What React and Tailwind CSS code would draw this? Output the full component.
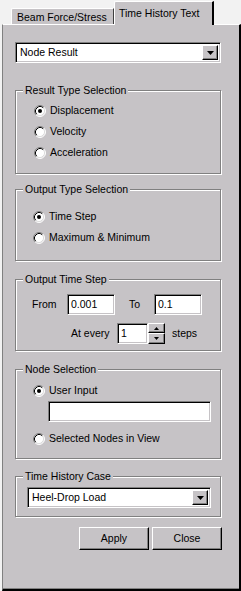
import React from "react";

const FONT = { fontFamily: '"Liberation Sans", Arial, sans-serif' };

function Radio({ checked }) {
  return (
    <svg width="12" height="12" viewBox="0 0 12 12" className="block shrink-0">
      <circle cx="6" cy="6" r="5" fill="#fff" />
      <path d="M2.11 9.89 A5.5 5.5 0 0 1 9.89 2.11" fill="none" stroke="#808080" strokeWidth="1" />
      <path d="M9.89 2.11 A5.5 5.5 0 0 1 2.11 9.89" fill="none" stroke="#ffffff" strokeWidth="1" />
      <path d="M2.82 9.18 A4.5 4.5 0 0 1 9.18 2.82" fill="none" stroke="#000" strokeWidth="1" />
      <path d="M9.18 2.82 A4.5 4.5 0 0 1 2.82 9.18" fill="none" stroke="#dcdcdc" strokeWidth="1" />
      {checked && <circle cx="6" cy="6" r="2" fill="#000" />}
    </svg>
  );
}

function RadioRow({ checked, label, className = "" }) {
  return (
    <div className={"h-[21px] flex items-center " + className}>
      <Radio checked={checked} />
      <span className="ml-[4px] whitespace-nowrap">{label}</span>
    </div>
  );
}

const sunken =
  "border border-t-[#808080] border-l-[#808080] border-b-white border-r-white shadow-[inset_1px_1px_0_#000,inset_-1px_-1px_0_#c6c3c6]";
const raised =
  "border border-t-white border-l-white border-b-black border-r-black shadow-[inset_-1px_-1px_0_#808080]";

function Arrow() {
  return (
    <svg width="7" height="4" viewBox="0 0 7 4" className="block">
      <polygon points="0,0 7,0 3.5,4" fill="#000" />
    </svg>
  );
}

function Select({ value, className = "" }) {
  return (
    <div className={"h-[21px] bg-white flex items-stretch p-[2px] " + sunken + " " + className}>
      <div className="flex-1 flex items-center pl-[2px] whitespace-nowrap">{value}</div>
      <div className={"w-[16px] bg-[#c6c3c6] flex items-center justify-center " + raised}>
        <Arrow />
      </div>
    </div>
  );
}

function Input({ value = "", className = "" }) {
  return (
    <div className={"h-[21px] bg-white flex items-center pl-[3px] " + sunken + " " + className}>
      {value}
    </div>
  );
}

function Group({ title, className = "", children }) {
  return (
    <div
      className={
        "w-[206px] border border-[#808080] shadow-[inset_1px_1px_0_#fff,1px_1px_0_#fff] " + className
      }
    >
      <div className="block w-fit -mt-[7px] ml-[7px] px-[2px] leading-[13px] bg-[#c6c3c6] whitespace-nowrap">
        {title}
      </div>
      {children}
    </div>
  );
}

export default function App() {
  return (
    <div className="w-[241px] h-[591px] bg-[#f2f2f2] text-[10.5px] leading-[13px] text-black flex flex-col" style={FONT}>
      <div className="h-[24px] flex items-end pl-[11px] relative z-10">
        <div className="w-[103px] h-[16px] bg-[#c6c3c6] border-t border-l border-white border-r border-r-[#404040] rounded-tl-[2px] pl-[5px] pt-[2px] whitespace-nowrap">
          Beam Force/Stress
        </div>
        <div className="w-[100px] h-[24px] -mb-[1px] bg-[#c6c3c6] border-t border-l border-white border-r-2 border-r-black rounded-tl-[2px] pl-[4px] pt-[5px] whitespace-nowrap">
          Time History Text
        </div>
      </div>
      <div className="ml-[2px] w-[239px] h-[567px] bg-[#c6c3c6] border-t border-t-white border-l border-l-[#808080] border-r-2 border-r-black border-b-2 border-b-black shadow-[inset_0_-1px_0_#808080] pl-[12px] pt-[17px] flex flex-col">
        <Select value="Node Result" className="w-[206px]" />

        <Group title="Result Type Selection" className="mt-[27px] pb-[10px]">
          <div className="mt-[3px] pl-[18px]">
            <RadioRow checked label="Displacement" />
            <RadioRow label="Velocity" />
            <RadioRow label="Acceleration" />
          </div>
        </Group>

        <Group title="Output Type Selection" className="mt-[15px] pb-[12px]">
          <div className="mt-[10px] pl-[17px]">
            <RadioRow checked label="Time Step" />
            <RadioRow label="Maximum &amp; Minimum" />
          </div>
        </Group>

        <Group title="Output Time Step" className="mt-[18px] pb-[6px]">
          <div className="mt-[8px] flex items-center pl-[16px]">
            <span className="w-[35px]">From</span>
            <Input value="0.001" className="w-[48px]" />
            <span className="ml-[14px] w-[25px]">To</span>
            <Input value="0.1" className="w-[48px]" />
          </div>
          <div className="mt-[8px] flex items-center pl-[55px]">
            <span className="w-[46px] whitespace-nowrap">At every</span>
            <Input value="1" className="w-[31px]" />
            <div className="w-[17px] h-[21px] flex flex-col">
              <div className={"h-[10px] bg-[#c6c3c6] flex items-center justify-center " + raised}>
                <svg width="5" height="3" viewBox="0 0 5 3" className="block">
                  <polygon points="2.5,0 5,3 0,3" fill="#000" />
                </svg>
              </div>
              <div className={"h-[11px] bg-[#c6c3c6] flex items-center justify-center " + raised}>
                <svg width="5" height="3" viewBox="0 0 5 3" className="block">
                  <polygon points="0,0 5,0 2.5,3" fill="#000" />
                </svg>
              </div>
            </div>
            <span className="ml-[7px]">steps</span>
          </div>
        </Group>

        <Group title="Node Selection" className="mt-[18px] pb-[9px]">
          <div className="mt-[4px] pl-[17px]">
            <RadioRow checked label="User Input" />
          </div>
          <Input className="ml-[32px] w-[163px]" />
          <div className="mt-[6px] pl-[17px]">
            <RadioRow label="Selected Nodes in View" />
          </div>
        </Group>

        <Group title="Time History Case" className="mt-[17px] pb-[8px]">
          <Select value="Heel-Drop Load" className="mt-[4px] ml-[11px] w-[184px]" />
        </Group>

        <div className="mt-[10px] w-[207px] flex justify-end gap-[3px]">
          <div className={"w-[70px] h-[23px] bg-[#c6c3c6] flex items-center justify-center " + raised}>Apply</div>
          <div className={"w-[70px] h-[23px] bg-[#c6c3c6] flex items-center justify-center " + raised}>Close</div>
        </div>
      </div>
    </div>
  );
}
